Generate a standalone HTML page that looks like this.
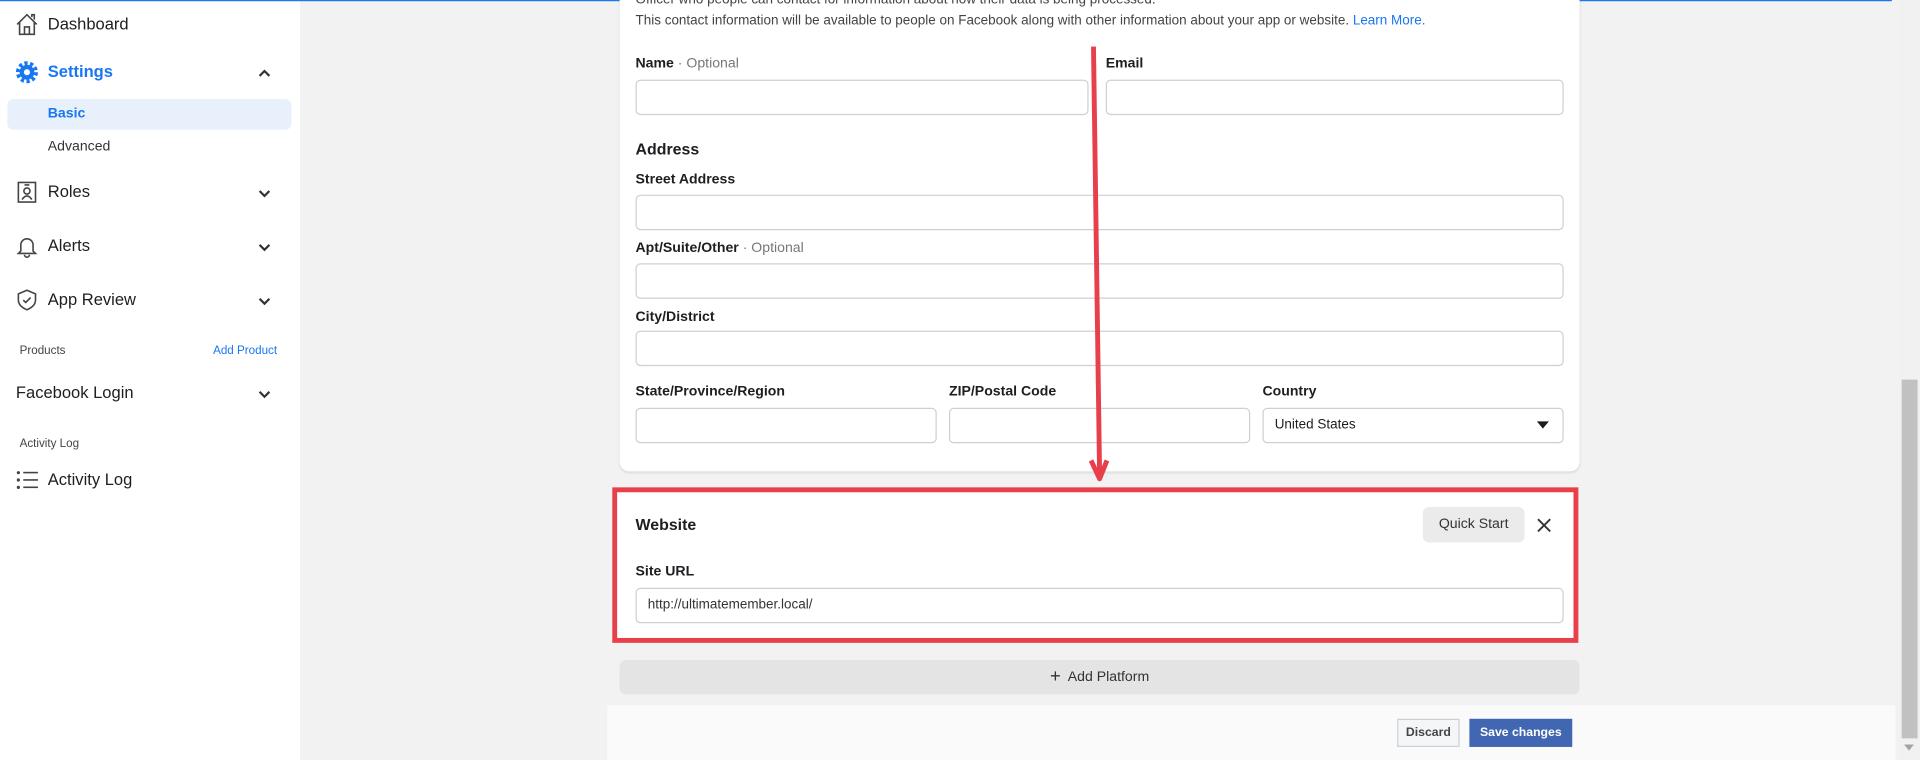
<!DOCTYPE html>
<html><head><meta charset="utf-8"><style>
html,body{margin:0;padding:0;width:1920px;height:760px;overflow:hidden;background:#f2f2f2;font-family:"Liberation Sans",sans-serif;}
#w{position:absolute;left:0;top:0;width:1568px;height:621px;transform:scale(1.2245);transform-origin:0 0;background:#f2f2f2;}
.a{position:absolute;}
.side{left:0;top:0;width:245px;height:621px;background:#fff;}
.it{font-size:13.5px;color:#1c1e21;}
.lbl{font-size:11.5px;font-weight:bold;color:#1c1e21;}
.opt{font-weight:normal;color:#777;}
.inp{background:#fff;border:1px solid #ccd0d5;border-radius:4px;box-sizing:border-box;height:29px;}
.chev{width:12px;height:8px;}
</style></head><body><div id="w">
<div class="a side">
 <svg class="a" style="left:12px;top:10px" width="20" height="20" viewBox="0 0 20 20" fill="none" stroke="#444" stroke-width="1.3"><path d="M2 10 L10 2 L18 10 M4 8 V18 H16 V8 M8 18 V12 H12 V18 M14 4 V2 H16 V6"/></svg>
 <div class="a it" style="left:39px;top:12px">Dashboard</div>
 <svg class="a" style="left:12px;top:49px" width="20" height="20" viewBox="0 0 20 20"><circle cx="10" cy="10" r="7" fill="none" stroke="#1877f2" stroke-width="4" stroke-dasharray="2.5 1.9"/><circle cx="10" cy="10" r="6" fill="#1877f2"/><circle cx="10" cy="10" r="2.5" fill="#fff"/></svg>
 <div class="a it" style="left:39px;top:51px;color:#1877f2;font-weight:bold">Settings</div>
 <svg class="a chev" style="left:210px;top:56px" viewBox="0 0 12 8"><path d="M2 6 L6 2 L10 6" fill="none" stroke="#333" stroke-width="1.8"/></svg>
 <div class="a" style="left:6px;top:81px;width:232px;height:25px;background:#e7f0fb;border-radius:5px"></div>
 <div class="a" style="left:39px;top:87px;font-size:11.5px;font-weight:bold;color:#1877f2">Basic</div>
 <div class="a" style="left:39px;top:114px;font-size:11.5px;color:#333">Advanced</div>
 <svg class="a" style="left:12px;top:147px" width="20" height="20" viewBox="0 0 20 20" fill="none" stroke="#444" stroke-width="1.3"><rect x="3" y="2" width="14" height="16"/><circle cx="10" cy="9" r="2.5"/><path d="M6 16 Q10 10 14 16 M8 4 H12"/></svg>
 <div class="a it" style="left:39px;top:149px">Roles</div>
 <svg class="a chev" style="left:210px;top:154px" viewBox="0 0 12 8"><path d="M2 2 L6 6 L10 2" fill="none" stroke="#333" stroke-width="1.8"/></svg>
 <svg class="a" style="left:12px;top:191px" width="20" height="20" viewBox="0 0 20 20" fill="none" stroke="#444" stroke-width="1.3"><path d="M5 14 V9 A5 5 0 0 1 15 9 V14 L17 16 H3 Z M8 17 A2 2 0 0 0 12 17"/></svg>
 <div class="a it" style="left:39px;top:193px">Alerts</div>
 <svg class="a chev" style="left:210px;top:198px" viewBox="0 0 12 8"><path d="M2 2 L6 6 L10 2" fill="none" stroke="#333" stroke-width="1.8"/></svg>
 <svg class="a" style="left:12px;top:235px" width="20" height="20" viewBox="0 0 20 20" fill="none" stroke="#444" stroke-width="1.3"><path d="M10 2 L17 5 V10 Q17 15 10 18 Q3 15 3 10 V5 Z M7 10 L9 12 L13 8"/></svg>
 <div class="a it" style="left:39px;top:237px">App Review</div>
 <svg class="a chev" style="left:210px;top:242px" viewBox="0 0 12 8"><path d="M2 2 L6 6 L10 2" fill="none" stroke="#333" stroke-width="1.8"/></svg>
 <div class="a" style="left:16px;top:281px;font-size:9.5px;color:#444">Products</div>
 <div class="a" style="left:174px;top:281px;font-size:9.5px;color:#1877f2">Add Product</div>
 <div class="a it" style="left:13px;top:313px">Facebook Login</div>
 <svg class="a chev" style="left:210px;top:318px" viewBox="0 0 12 8"><path d="M2 2 L6 6 L10 2" fill="none" stroke="#333" stroke-width="1.8"/></svg>
 <div class="a" style="left:16px;top:357px;font-size:9.5px;color:#444">Activity Log</div>
 <svg class="a" style="left:13px;top:384px" width="20" height="16" viewBox="0 0 20 16" fill="#444"><circle cx="2" cy="2" r="1.3"/><circle cx="2" cy="8" r="1.3"/><circle cx="2" cy="14" r="1.3"/><rect x="6" y="1.3" width="12" height="1.3"/><rect x="6" y="7.3" width="12" height="1.3"/><rect x="6" y="13.3" width="12" height="1.3"/></svg>
 <div class="a it" style="left:39px;top:384px">Activity Log</div>
</div>
<div class="a" style="left:0;top:0;width:1545px;height:1px;background:#1877f2"></div>

<div class="a" style="left:506px;top:-10px;width:784px;height:395px;background:#fff;border-radius:8px;box-shadow:0 1px 2px rgba(0,0,0,.1)"></div>
<div class="a" style="left:519px;top:-6px;font-size:11px;color:#444">Officer who people can contact for information about how their data is being processed.</div>
<div class="a" style="left:519px;top:11px;font-size:11px;color:#444">This contact information will be available to people on Facebook along with other information about your app or website. <span style="color:#1877f2">Learn More.</span></div>
<div class="a lbl" style="left:519px;top:46px">Name <span class="opt">· Optional</span></div>
<div class="a lbl" style="left:903px;top:46px">Email</div>
<div class="a inp" style="left:519px;top:65px;width:370px"></div>
<div class="a inp" style="left:903px;top:65px;width:374px"></div>
<div class="a" style="left:519px;top:114px;font-size:13px;font-weight:bold;color:#1c1e21">Address</div>
<div class="a lbl" style="left:519px;top:141px">Street Address</div>
<div class="a inp" style="left:519px;top:159px;width:758px"></div>
<div class="a lbl" style="left:519px;top:197px">Apt/Suite/Other <span class="opt">· Optional</span></div>
<div class="a inp" style="left:519px;top:215px;width:758px"></div>
<div class="a lbl" style="left:519px;top:253px">City/District</div>
<div class="a inp" style="left:519px;top:270px;width:758px"></div>
<div class="a lbl" style="left:519px;top:314px">State/Province/Region</div>
<div class="a lbl" style="left:775px;top:314px">ZIP/Postal Code</div>
<div class="a lbl" style="left:1031px;top:314px">Country</div>
<div class="a inp" style="left:519px;top:333px;width:246px"></div>
<div class="a inp" style="left:775px;top:333px;width:246px"></div>
<div class="a inp" style="left:1031px;top:333px;width:246px"></div>
<div class="a" style="left:1041px;top:341px;font-size:11px;color:#1c1e21">United States</div>
<svg class="a" style="left:1255px;top:344px" width="10" height="6" viewBox="0 0 10 6"><path d="M0 0 H10 L5 6 Z" fill="#1c1e21"/></svg>

<svg class="a" style="left:0;top:0" width="1568" height="621"><path d="M893 38 L898 388" stroke="#e8404a" stroke-width="4" fill="none"/><path d="M891 376 L898 391 L904 376" stroke="#e8404a" stroke-width="4" fill="none" stroke-linejoin="round"/></svg>

<div class="a" style="left:500px;top:398px;width:789px;height:127px;box-sizing:border-box;border:4px solid #e8404a;background:#fff"></div>
<div class="a" style="left:519px;top:421px;font-size:13px;font-weight:bold;color:#1c1e21">Website</div>
<div class="a" style="left:1162px;top:414px;width:83px;height:29px;background:#ebebeb;border-radius:5px;font-size:11.5px;color:#333;text-align:center;line-height:29px">Quick Start</div>
<svg class="a" style="left:1255px;top:423px" width="12" height="12" viewBox="0 0 12 12"><path d="M1 1 L11 11 M11 1 L1 11" stroke="#333" stroke-width="1.5"/></svg>
<div class="a lbl" style="left:519px;top:461px">Site URL</div>
<div class="a inp" style="left:519px;top:480px;width:758px"></div>
<div class="a" style="left:529px;top:488px;font-size:11px;color:#333">http://ultimatemember.local/</div>

<div class="a" style="left:506px;top:539px;width:784px;height:28px;background:#e4e4e4;border-radius:5px;font-size:11.5px;color:#333;text-align:center;line-height:28px"><span style="font-size:15px;vertical-align:-1px">+</span>&nbsp; Add Platform</div>

<div class="a" style="left:496px;top:576px;width:1052px;height:45px;background:#fafafa"></div>
<div class="a" style="left:1141px;top:587px;width:51px;height:23px;box-sizing:border-box;border:1px solid #ccd0d5;background:#f5f6f7;font-size:10px;font-weight:bold;color:#444;text-align:center;line-height:21px">Discard</div>
<div class="a" style="left:1200px;top:587px;width:84px;height:23px;background:#4267b2;font-size:10px;font-weight:bold;color:#fff;text-align:center;line-height:23px">Save changes</div>

<div class="a" style="left:1551px;top:0;width:17px;height:621px;background:#f1f1f1"></div>
<div class="a" style="left:1553px;top:310px;width:13px;height:293px;background:#c1c1c1"></div>
<svg class="a" style="left:1555px;top:608px" width="8" height="6" viewBox="0 0 8 6"><path d="M0 0 H8 L4 5 Z" fill="#a3a3a3"/></svg>
</div></body></html>
